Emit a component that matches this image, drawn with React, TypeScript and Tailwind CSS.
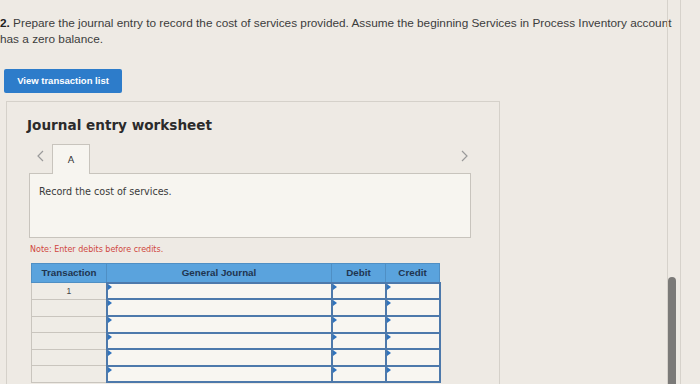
import React from 'react'

const ROWS = 6

function Arrow() {
  return <span className="absolute left-0 top-0 h-0 w-0 border-y-[3px] border-l-[4px] border-y-transparent border-l-[#2f73bd]" />
}

function InputCell({ w }: { w: string }) {
  return (
    <td className={`relative ${w} border-2 border-[#4d79ab] bg-[#f8f6f1] p-0`}>
      <Arrow />
    </td>
  )
}

export default function App() {
  const rows = Array.from({ length: ROWS }, (_, i) => i)

  return (
    <div className="relative h-[384px] w-[700px] overflow-hidden bg-[#eeeae4]">
      {/* scrollbar */}
      <div className="absolute left-[667px] top-0 h-full w-[14px] border-x border-[#d6d2cb]" />
      <div className="absolute left-[668px] top-[277px] h-[110px] w-[8px] rounded-t-full bg-[#7b7a78]" />

      <div className="pt-[15px]">
        <p className="text-[11.8px] leading-[16px] text-[#3c3c3c] [font-family:'Liberation_Sans',Arial,sans-serif]">
          <b className="text-[#222]">2.</b> Prepare the journal entry to record the cost of services provided. Assume the beginning Services in Process Inventory account
          <br />
          has a zero balance.
        </p>

        <button className="ml-[4px] mt-[22px] flex h-[24px] w-[118px] items-center justify-center rounded-[2px] bg-[#2d7cca] text-[9.5px] font-bold text-white [font-family:'Liberation_Sans',Arial,sans-serif]">
          View transaction list
        </button>

        <div className="ml-[6px] mt-[8px] w-[494px] border-x border-t border-[#d5d1ca] pb-4 pl-[20px] pr-[30px]">
          <h2 className="mt-[13px] text-[13.6px] font-bold text-[#2b2b2b] [font-family:'DejaVu_Sans',Verdana,sans-serif]">
            Journal entry worksheet
          </h2>

          <div className="mt-[9px] flex items-end">
            <div className="flex h-[29px] w-[25px] items-center justify-center pb-[6px] text-[#9a9a9a]">
              <svg width="8" height="12" viewBox="0 0 8 12" fill="none" stroke="currentColor" strokeWidth="1.2">
                <path d="M7 1 L2 6 L7 11" />
              </svg>
            </div>
            <div className="relative z-10 -mb-px flex h-[30px] w-[38px] items-center justify-center border border-b-0 border-[#c8c4bd] bg-[#f7f5f0] text-[9.5px] text-[#333] [font-family:'DejaVu_Sans',Verdana,sans-serif]">
              A
            </div>
            <div className="flex-1" />
            <div className="flex h-[29px] items-center pb-[6px] text-[#9a9a9a]">
              <svg width="8" height="12" viewBox="0 0 8 12" fill="none" stroke="currentColor" strokeWidth="1.2">
                <path d="M1 1 L6 6 L1 11" />
              </svg>
            </div>
          </div>

          <div className="ml-[2px] h-[65px] w-[442px] border border-[#c8c4bd] bg-[#f7f5f0] px-[9px] pt-[11px] text-[9.6px] text-[#3a3a3a] [font-family:'DejaVu_Sans',Verdana,sans-serif]">
            Record the cost of services.
          </div>

          <p className="ml-[3px] mt-[6px] text-[8px] text-[#d0473e] [font-family:'DejaVu_Sans',Verdana,sans-serif]">
            Note: Enter debits before credits.
          </p>

          <table className="ml-[4px] mt-[7px] w-[408px] table-fixed border-collapse [font-family:'Liberation_Sans',Arial,sans-serif]">
            <thead>
              <tr className="h-[19px] bg-[#5aa3dd] text-[9.8px] font-bold text-[#1f3550]">
                <th className="w-[75px] border border-[#4f8fc4] font-bold">Transaction</th>
                <th className="w-[225px] border border-[#4f8fc4] font-bold">General Journal</th>
                <th className="w-[54px] border border-[#4f8fc4] font-bold">Debit</th>
                <th className="w-[54px] border border-[#4f8fc4] font-bold">Credit</th>
              </tr>
            </thead>
            <tbody>
              {rows.map((i) => (
                <tr key={i} className="h-[16.6px]">
                  <td className="border border-[#c9c5be] bg-[#efece6] p-0 text-center text-[8.5px] text-[#444]">
                    {i === 0 ? '1' : ''}
                  </td>
                  <InputCell w="w-[225px]" />
                  <InputCell w="w-[54px]" />
                  <InputCell w="w-[54px]" />
                </tr>
              ))}
            </tbody>
          </table>
        </div>
      </div>
    </div>
  )
}
